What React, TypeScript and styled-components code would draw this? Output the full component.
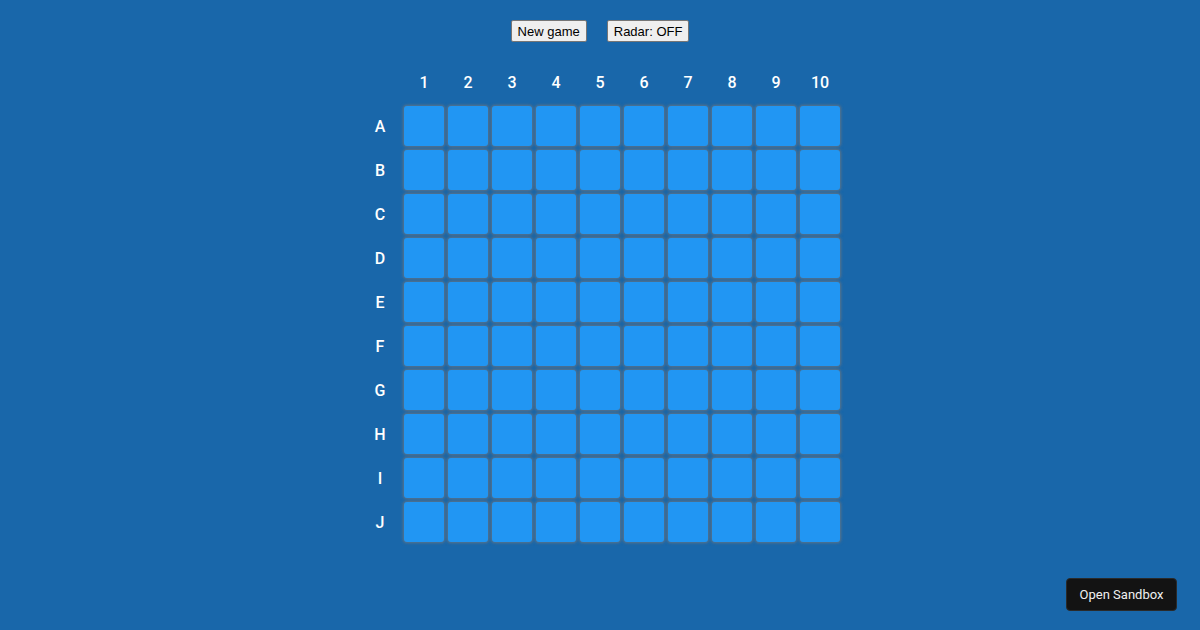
import styled, { createGlobalStyle } from 'styled-components';

const ROWS = ['A', 'B', 'C', 'D', 'E', 'F', 'G', 'H', 'I', 'J'];
const COLS = [1, 2, 3, 4, 5, 6, 7, 8, 9, 10];

const GlobalStyle = createGlobalStyle`
  html, body {
    margin: 0;
    padding: 0;
    background: #1967aa;
    font-family: Roboto, "Liberation Sans", sans-serif;
  }
`;

const Page = styled.div`
  display: flex;
  flex-direction: column;
  align-items: center;
  padding-top: 20px;
  min-height: 630px;
  box-sizing: border-box;
`;

const Toolbar = styled.div`
  display: flex;
  gap: 20px;
  height: 22px;
`;

const Button = styled.button`
  font-family: "Liberation Sans", Arial, sans-serif;
  font-size: 13px;
  height: 22px;
  padding: 1px 6px;
  background: #efefef;
  color: #000;
  border: 1px solid #767676;
  border-radius: 2px;
`;

const Board = styled.div`
  display: grid;
  grid-template-columns: repeat(11, 44px);
  grid-auto-rows: 44px;
  margin-top: 18px;
`;

const Label = styled.div`
  display: flex;
  align-items: center;
  justify-content: center;
  color: #ffffff;
  font-size: 16px;
  font-weight: 500;
`;

const Cell = styled.div`
  margin: 2px;
  background: #2196f3;
  border-radius: 3px;
  box-shadow: 0 0 3px 1px rgba(120, 120, 120, 0.75);
`;

const SandboxButton = styled.button`
  position: fixed;
  right: 23px;
  bottom: 19px;
  width: 111px;
  height: 33px;
  background: #131313;
  color: #f0f0f0;
  border: 1px solid #2a2a2a;
  border-radius: 4px;
  font-family: Roboto, "Liberation Sans", sans-serif;
  font-size: 13px;
`;

const App = () => {
  return (
    <>
      <GlobalStyle />
      <Page>
        <Toolbar>
          <Button>New game</Button>
          <Button>Radar: OFF</Button>
        </Toolbar>
        <Board>
          <Label />
          {COLS.map((c) => (
            <Label key={c}>{c}</Label>
          ))}
          {ROWS.map((r) => [
            <Label key={r}>{r}</Label>,
            ...COLS.map((c) => <Cell key={r + c} />),
          ])}
        </Board>
      </Page>
      <SandboxButton>Open Sandbox</SandboxButton>
    </>
  );
};

export default App;
